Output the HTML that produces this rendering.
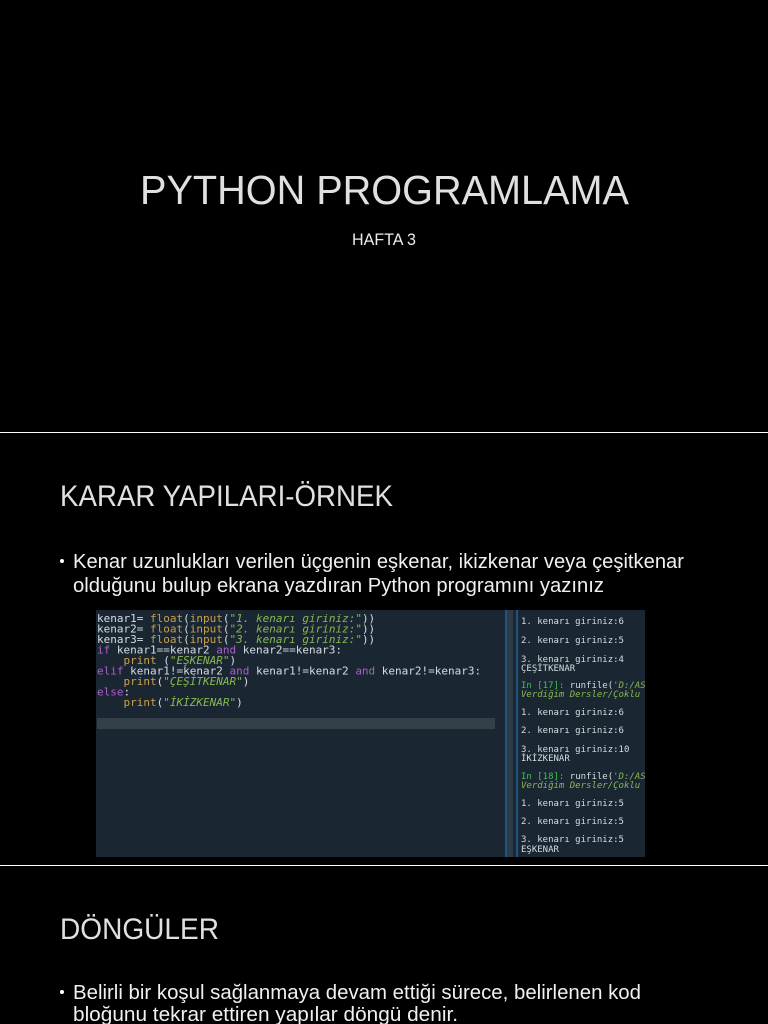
<!DOCTYPE html>
<html lang="tr">
<head>
<meta charset="utf-8">
<title>Python Programlama</title>
<style>
html,body{margin:0;padding:0;background:#000;width:768px;height:1024px;overflow:hidden}
svg{display:block;position:absolute;left:0;top:0}
text{font-family:"Liberation Sans",sans-serif;fill:#fff}
.c text{font-family:"DejaVu Sans Mono","Liberation Mono",monospace;font-size:11px;fill:#d5dce2;white-space:pre}
.o text{font-family:"DejaVu Sans Mono","Liberation Mono",monospace;font-size:9px;fill:#d5dce2;white-space:pre}
.f{fill:#c9a04a}.s{fill:#86b84f;font-style:italic}.k{fill:#ad5cc9}.g{fill:#3fbf4f}
</style>
</head>
<body>
<svg width="768" height="1024" viewBox="0 0 768 1024" xmlns="http://www.w3.org/2000/svg">
<defs>
<filter id="b" x="-2%" y="-2%" width="104%" height="104%"><feGaussianBlur stdDeviation="0.35"/></filter>
<clipPath id="im"><rect x="96" y="610" width="549" height="247"/></clipPath>
</defs>
<rect width="768" height="1024" fill="#000"/>
<text x="140" y="204" font-size="41" textLength="489" lengthAdjust="spacingAndGlyphs" fill-opacity=".88">PYTHON PROGRAMLAMA</text>
<text x="352" y="245" font-size="17" textLength="64" lengthAdjust="spacingAndGlyphs" fill-opacity=".92">HAFTA 3</text>
<rect x="0" y="432" width="768" height="1" fill="#fff"/>
<rect x="0" y="865" width="768" height="1" fill="#fff"/>

<text x="60" y="506" font-size="30" textLength="333" lengthAdjust="spacingAndGlyphs" fill-opacity=".88">KARAR YAPILARI-ÖRNEK</text>
<circle cx="62" cy="561" r="2" fill="#fff"/>
<text x="73" y="568" font-size="20" textLength="611" lengthAdjust="spacingAndGlyphs" fill-opacity=".94">Kenar uzunlukları verilen üçgenin eşkenar, ikizkenar veya çeşitkenar</text>
<text x="73" y="592" font-size="20" textLength="531" lengthAdjust="spacingAndGlyphs" fill-opacity=".94">olduğunu bulup ekrana yazdıran Python programını yazınız</text>

<g clip-path="url(#im)">
<rect x="96" y="610" width="549" height="247" fill="#1a2733"/>
<rect x="97" y="718" width="398" height="11" fill="#343f49"/>
<rect x="505" y="610" width="2" height="247" fill="#1d5580"/>
<rect x="507" y="610" width="6" height="247" fill="#2e3a44"/>
<rect x="516" y="610" width="2" height="247" fill="#1d5580"/>
<g filter="url(#b)">
<g class="c">
<text x="97" y="622">kenar1= <tspan class="f">float</tspan>(<tspan class="f">input</tspan>(<tspan class="s">"1. kenarı giriniz:"</tspan>))</text>
<text x="97" y="632.5">kenar2= <tspan class="f">float</tspan>(<tspan class="f">input</tspan>(<tspan class="s">"2. kenarı giriniz:"</tspan>))</text>
<text x="97" y="643">kenar3= <tspan class="f">float</tspan>(<tspan class="f">input</tspan>(<tspan class="s">"3. kenarı giriniz:"</tspan>))</text>
<text x="97" y="653.5"><tspan class="k">if</tspan> kenar1==kenar2 <tspan class="k">and</tspan> kenar2==kenar3:</text>
<text x="97" y="664">    <tspan class="f">print</tspan> (<tspan class="s">"EŞKENAR"</tspan>)</text>
<text x="97" y="674.5"><tspan class="k">elif</tspan> kenar1!=kenar2 <tspan class="k">and</tspan> kenar1!=kenar2 <tspan class="k">and</tspan> kenar2!=kenar3:</text>
<text x="97" y="685">    <tspan class="f">print</tspan>(<tspan class="s">"ÇEŞİTKENAR"</tspan>)</text>
<text x="97" y="695.5"><tspan class="k">else</tspan>:</text>
<text x="97" y="706">    <tspan class="f">print</tspan>(<tspan class="s">"İKİZKENAR"</tspan>)</text>
</g>
<g class="o">
<text x="521" y="624">1. kenarı giriniz:6</text>
<text x="521" y="643">2. kenarı giriniz:5</text>
<text x="521" y="662">3. kenarı giriniz:4</text>
<text x="521" y="671">ÇEŞİTKENAR</text>
<text x="521" y="688"><tspan class="g">In [17]:</tspan> runfile(<tspan class="s">'D:/ASÜ</tspan></text>
<text x="521" y="697"><tspan class="s">Verdiğim Dersler/Çoklu</tspan></text>
<text x="521" y="715">1. kenarı giriniz:6</text>
<text x="521" y="733">2. kenarı giriniz:6</text>
<text x="521" y="752">3. kenarı giriniz:10</text>
<text x="521" y="761">İKİZKENAR</text>
<text x="521" y="779"><tspan class="g">In [18]:</tspan> runfile(<tspan class="s">'D:/ASÜ</tspan></text>
<text x="521" y="788"><tspan class="s">Verdiğim Dersler/Çoklu</tspan></text>
<text x="521" y="806">1. kenarı giriniz:5</text>
<text x="521" y="824">2. kenarı giriniz:5</text>
<text x="521" y="842">3. kenarı giriniz:5</text>
<text x="521" y="852">EŞKENAR</text>
<text x="521" y="864"><tspan class="s">Verdiğim Dersler/Çoklu</tspan></text>
</g>
</g>
</g>

<text x="60" y="939" font-size="30" textLength="159" lengthAdjust="spacingAndGlyphs" fill-opacity=".88">DÖNGÜLER</text>
<circle cx="62" cy="992" r="2" fill="#fff"/>
<text x="73" y="999" font-size="20" textLength="568" lengthAdjust="spacingAndGlyphs" fill-opacity=".94">Belirli bir koşul sağlanmaya devam ettiği sürece, belirlenen kod</text>
<text x="73" y="1021" font-size="20" textLength="385" lengthAdjust="spacingAndGlyphs" fill-opacity=".94">bloğunu tekrar ettiren yapılar döngü denir.</text>
</svg>
</body>
</html>
